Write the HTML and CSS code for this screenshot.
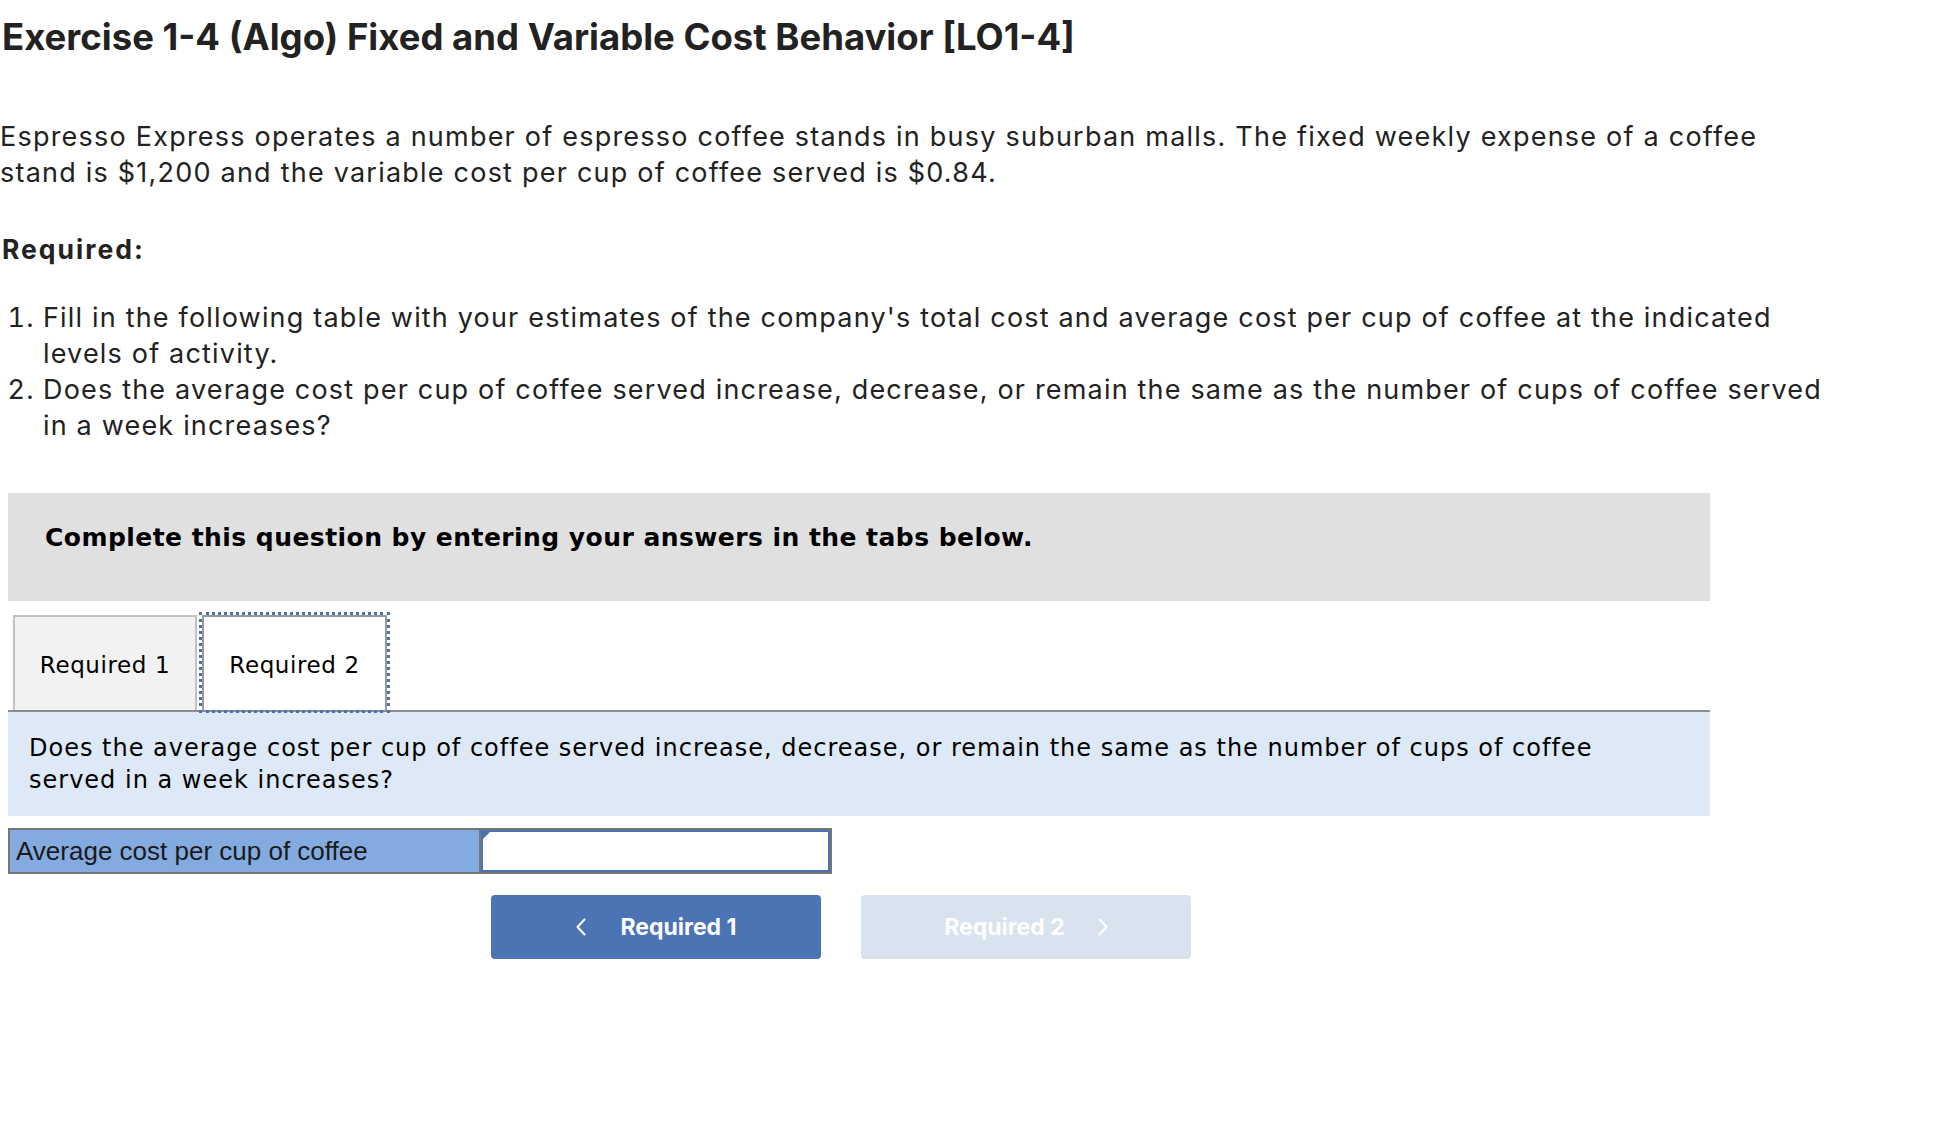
FILE: index.html
```html
<!DOCTYPE html>
<html lang="en">
<head>
<meta charset="utf-8">
<title>Exercise 1-4 (Algo) Fixed and Variable Cost Behavior</title>
<link rel="stylesheet" href="styles.css">
</head>
<body>
<main class="page">
  <h1 class="title">Exercise 1-4 (Algo) Fixed and Variable Cost Behavior [LO1-4]</h1>
  <p class="intro">Espresso Express operates a number of espresso coffee stands in busy suburban malls. The fixed weekly expense of a coffee stand is $1,200 and the variable cost per cup of coffee served is $0.84.</p>
  <p class="req-label">Required:</p>
  <ol class="req-list">
    <li>Fill in the following table with your estimates of the company's total cost and average cost per cup of coffee at the indicated levels of activity.</li>
    <li>Does the average cost per cup of coffee served increase, decrease, or remain the same as the number of cups of coffee served in a week increases?</li>
  </ol>

  <section class="work">
    <div class="banner">Complete this question by entering your answers in the tabs below.</div>
    <div class="tabs">
      <div class="tab">Required 1</div>
      <div class="tab active">Required 2</div>
    </div>
    <div class="question">Does the average cost per cup of coffee served increase, decrease, or remain the same as the number of cups of coffee served in a week increases?</div>
    <div class="answer-row">
      <div class="ans-label">Average cost per cup of coffee</div>
      <div class="ans-input"><span class="corner"></span></div>
    </div>
    <div class="nav">
      <button class="nav-btn prev" type="button">
        <svg class="chev" viewBox="0 0 10 18" width="10" height="18"><polyline points="8.5,1.5 1.5,9 8.5,16.5" fill="none" stroke="#fff" stroke-width="2" stroke-linecap="round" stroke-linejoin="round"/></svg>
        <span>Required 1</span>
      </button>
      <button class="nav-btn next" type="button">
        <span>Required 2</span>
        <svg class="chev" viewBox="0 0 10 18" width="10" height="18"><polyline points="1.5,1.5 8.5,9 1.5,16.5" fill="none" stroke="#fff" stroke-width="2" stroke-linecap="round" stroke-linejoin="round"/></svg>
      </button>
    </div>
  </section>
</main>
</body>
</html>
```

FILE: styles.css
```css
html, body {
  margin: 0;
  padding: 0;
  background: #ffffff;
}

.page {
  width: 1845px;
  color: #222222;
  font-family: "Inter", "Lato", sans-serif;
}

.title {
  margin: 15px 0 0 2px;
  font-size: 36.5px;
  line-height: 44px;
  font-weight: 700;
  color: #222222;
}

.intro {
  max-width: 1805px;
  margin: 60px 0 0 0;
  font-size: 27px;
  letter-spacing: 1.22px;
  line-height: 36px;
}

.req-label {
  margin: 40px 0 0 2px;
  font-size: 26.5px;
  letter-spacing: 2px;
  line-height: 36px;
  font-weight: 700;
}

.req-list {
  margin: 33px 0 0 0;
  padding-left: 43px;
  font-size: 27px;
  letter-spacing: 1.18px;
  line-height: 36px;
}

.work {
  margin: 49px 0 0 8px;
  width: 1702px;
}

.banner {
  background: #e0e0e0;
  height: 108px;
  box-sizing: border-box;
  padding: 30px 37px 0 37px;
  font-family: "DejaVu Sans", Verdana, sans-serif;
  font-weight: 700;
  font-size: 25px;
  letter-spacing: 0.45px;
  line-height: 30px;
  color: #000000;
}

.tabs {
  display: flex;
  align-items: flex-end;
  gap: 5px;
  margin-top: 14px;
  padding-left: 5px;
  border-bottom: 2px solid #8d8d8d;
}

.tab {
  width: 184px;
  height: 95px;
  box-sizing: border-box;
  display: flex;
  align-items: center;
  justify-content: center;
  padding-top: 3px;
  background: #f2f2f2;
  border: 2px solid #c2c2c2;
  border-bottom: none;
  font-family: "DejaVu Sans", Verdana, sans-serif;
  font-size: 23px;
  letter-spacing: 0.6px;
  color: #000000;
}

.tab.active {
  width: 185px;
  background: #ffffff;
  border-color: #999999;
  outline: 3px dotted #4a72b0;
  outline-offset: 0px;
}

.question {
  background: #dde9f6;
  box-sizing: border-box;
  height: 104px;
  padding: 20px 40px 0 21px;
  font-family: "DejaVu Sans", Verdana, sans-serif;
  font-size: 24px;
  letter-spacing: 1px;
  line-height: 32px;
  color: #000000;
}

.answer-row {
  display: flex;
  margin-top: 12px;
  height: 46px;
  width: 824px;
}

.ans-label {
  width: 471px;
  box-sizing: border-box;
  background: #84abe0;
  border: 2px solid #767676;
  border-right: none;
  padding: 0 0 0 6px;
  display: flex;
  align-items: center;
  font-family: "Liberation Sans", Arial, sans-serif;
  font-size: 26px;
  color: #1a1a1a;
}

.ans-input {
  position: relative;
  flex: 1;
  box-sizing: border-box;
  background: #ffffff;
  border: 2px solid #767676;
  box-shadow: inset 0 0 0 2px #4a72b0;
}

.corner {
  position: absolute;
  top: 2px;
  left: 2px;
  width: 0;
  height: 0;
  border-top: 7px solid #4a72b0;
  border-right: 7px solid transparent;
  border-bottom: 7px solid transparent;
}

.nav {
  display: flex;
  gap: 40px;
  margin: 21px 0 0 483px;
}

.nav-btn {
  width: 330px;
  height: 64px;
  border: none;
  border-radius: 4px;
  display: flex;
  align-items: center;
  justify-content: center;
  gap: 33px;
  font-family: "Inter", "Lato", sans-serif;
  font-weight: 700;
  font-size: 23px;
  color: #ffffff;
  padding: 0;
}

.nav-btn.prev {
  background: #4a74b4;
}

.nav-btn.next {
  background: #d9e3ef;
}

.nav-btn.prev span {
  margin-left: 2px;
}

.chev {
  display: block;
}
```
